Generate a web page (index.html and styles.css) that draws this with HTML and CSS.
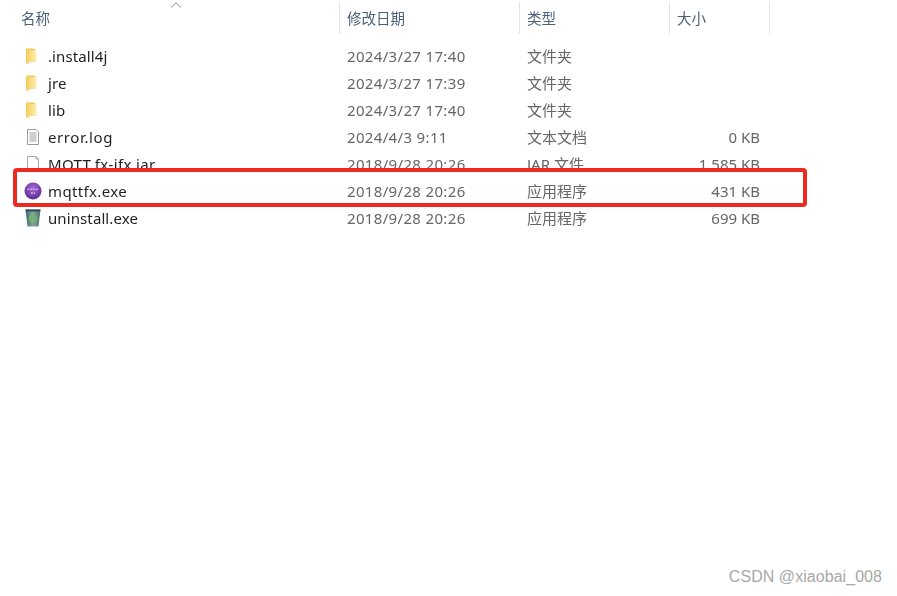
FILE: index.html
```html
<!DOCTYPE html>
<html lang="zh-CN">
<head>
<meta charset="utf-8">
<title>mqttfx</title>
<link rel="stylesheet" href="styles.css">
</head>
<body>
<svg class="defs" width="0" height="0" aria-hidden="true">
  <defs>
    <linearGradient id="fold" x1="0" y1="0" x2="1" y2="0">
      <stop offset="0" stop-color="#f7d774"/>
      <stop offset="1" stop-color="#fdeeb5"/>
    </linearGradient>
    <radialGradient id="orb" cx="0.5" cy="0.35" r="0.65">
      <stop offset="0" stop-color="#a768d8"/>
      <stop offset="1" stop-color="#5b2a94"/>
    </radialGradient>
    <linearGradient id="bin" x1="0" y1="0" x2="1" y2="0">
      <stop offset="0" stop-color="#3f6a70"/>
      <stop offset="0.5" stop-color="#88a6a6"/>
      <stop offset="1" stop-color="#4b7076"/>
    </linearGradient>
    <symbol id="folder" viewBox="0 0 18 18">
      <path d="M2 1.500H9.500L12 3V14.500L5 14.800L4.500 16.600L2.600 16.500L2 15.500Z" fill="#f2c654"/>
      <path d="M5 3H12.500V14.600H5Z" fill="url(#fold)"/>
      <path d="M2.500 2H5L5.200 14.500L4.500 16.500H3Z" fill="#f6d468"/>
    </symbol>
  </defs>
</svg>
<main class="explorer">
  <header class="head">
    <div class="col-name hcell">名称<svg class="sort" width="12" height="6" viewBox="0 0 12 6"><path d="M1 5.500L6 .8L11 5.500" fill="none" stroke="#8a929a" stroke-width="1"/></svg></div>
    <div class="col-date hcell">修改日期</div>
    <div class="col-type hcell">类型</div>
    <div class="col-size hcell">大小</div>
  </header>
  <section class="rows">
    <div class="row">
      <div class="col-name cell"><svg class="ico" width="18" height="18"><use href="#folder"/></svg><span class="fname">.install4j</span></div>
      <div class="col-date cell">2024/3/27 17:40</div><div class="col-type cell">文件夹</div><div class="col-size cell"></div>
    </div>
    <div class="row">
      <div class="col-name cell"><svg class="ico" width="18" height="18"><use href="#folder"/></svg><span class="fname">jre</span></div>
      <div class="col-date cell">2024/3/27 17:39</div><div class="col-type cell">文件夹</div><div class="col-size cell"></div>
    </div>
    <div class="row">
      <div class="col-name cell"><svg class="ico" width="18" height="18"><use href="#folder"/></svg><span class="fname">lib</span></div>
      <div class="col-date cell">2024/3/27 17:40</div><div class="col-type cell">文件夹</div><div class="col-size cell"></div>
    </div>
    <div class="row">
      <div class="col-name cell"><svg class="ico" width="18" height="18" viewBox="0 0 18 18"><path d="M3.500 1.500H12L14.500 4V16.500H3.500Z" fill="#fff" stroke="#9a9a9a"/><path d="M5.500 5H12.500M5.500 7H12.500M5.500 9H12.500M5.500 11H12.500M5.500 13H12.500" stroke="#9c9c9c"/></svg><span class="fname fname-xwide">error.log</span></div>
      <div class="col-date cell">2024/4/3 9:11</div><div class="col-type cell">文本文档</div><div class="col-size cell">0 KB</div>
    </div>
    <div class="row">
      <div class="col-name cell"><svg class="ico" width="18" height="18" viewBox="0 0 18 18"><path d="M3.500 1.500H12L14.500 4V16.500H3.500Z" fill="#fff" stroke="#a8a8a8"/><path d="M12 1.500V4H14.500" fill="none" stroke="#a8a8a8"/></svg><span class="fname fname-wide">MQTT.fx-jfx.jar</span></div>
      <div class="col-date cell">2018/9/28 20:26</div><div class="col-type cell">JAR 文件</div><div class="col-size cell">1,585 KB</div>
    </div>
    <div class="row row-marked">
      <div class="callout"></div>
      <div class="col-name cell"><svg class="ico" width="18" height="18" viewBox="0 0 18 18"><circle cx="9" cy="9" r="8.500" fill="url(#orb)"/><path d="M3.500 7.300H14.500M7 11H11" stroke="#d9c4ee" stroke-width="1.300" stroke-dasharray="1.800 1"/></svg><span class="fname fname-wide">mqttfx.exe</span></div>
      <div class="col-date cell">2018/9/28 20:26</div><div class="col-type cell">应用程序</div><div class="col-size cell">431 KB</div>
    </div>
    <div class="row">
      <div class="col-name cell"><svg class="ico" width="18" height="18" viewBox="0 0 18 18"><path d="M1.500 0.500H16.500L14.500 17.500H3.500Z" fill="url(#bin)"/><path d="M1.500 .5H16.500L16.200 2.500H1.800Z" fill="#2f4f55"/><circle cx="9" cy="9.500" r="3.200" fill="none" stroke="#6fc04f" stroke-width="1.600"/></svg><span class="fname">uninstall.exe</span></div>
      <div class="col-date cell">2018/9/28 20:26</div><div class="col-type cell">应用程序</div><div class="col-size cell">699 KB</div>
    </div>
  </section>
</main>
<footer class="mark">CSDN @xiaobai_008</footer>
</body>
</html>
```
FILE: styles.css
```css
* { box-sizing: border-box; }
html, body { margin: 0; height: 100%; background: #fff; }
body {
  width: 897px;
  height: 596px;
  overflow: hidden;
  position: relative;
  font-family: "Noto Sans", "Noto Sans CJK SC", sans-serif;
  font-size: 15px;
  color: #1f1f1f;
}
.defs { position: absolute; }
.explorer { padding-top: 2px; filter: blur(0.3px); }
.head { display: flex; height: 32px; }
.hcell {
  position: relative;
  display: flex;
  align-items: center;
  color: #4c607a;
  font-size: 14.500px;
  padding-bottom: 1px;
}
.col-name { width: 340px; flex: none; padding-left: 21px; }
.col-date { width: 180px; flex: none; padding-left: 7px; }
.col-type { width: 150px; flex: none; padding-left: 7px; }
.col-size { width: 100px; flex: none; padding-left: 7px; }
.hcell.col-name { border-right: 1px solid #e5e5e5; }
.hcell.col-date { border-right: 1px solid #e5e5e5; }
.hcell.col-type { border-right: 1px solid #e5e5e5; }
.hcell.col-size { border-right: 1px solid #e5e5e5; }
.sort { position: absolute; left: 170px; top: 0; }
.rows { padding-top: 8px; }
.row { display: flex; height: 27px; align-items: center; position: relative; }
.cell { color: #666; white-space: nowrap; }
.cell.col-date { letter-spacing: 0.34px; }
.cell.col-name { color: #1f1f1f; display: flex; align-items: center; padding-left: 24px; }
.fname { display: block; letter-spacing: 0.1px; }
.fname-wide { letter-spacing: 0.35px; }
.fname-xwide { letter-spacing: 0.6px; }
.cell.col-size { text-align: right; padding-right: 10px; padding-left: 0; }
.ico { flex: none; margin-right: 6px; }
.row-marked { z-index: 1; }
.callout {
  position: absolute;
  left: 13px;
  top: -9px;
  width: 794px;
  height: 39px;
  border: 4px solid #ee2a20;
  border-radius: 4px;
  background: #fff;
  z-index: -1;
}
.mark {
  position: absolute;
  right: 15px;
  top: 568px;
  font-family: "Liberation Sans", sans-serif;
  font-size: 16px;
  color: #a8a8a8;
  letter-spacing: 0.050px;
}
```
